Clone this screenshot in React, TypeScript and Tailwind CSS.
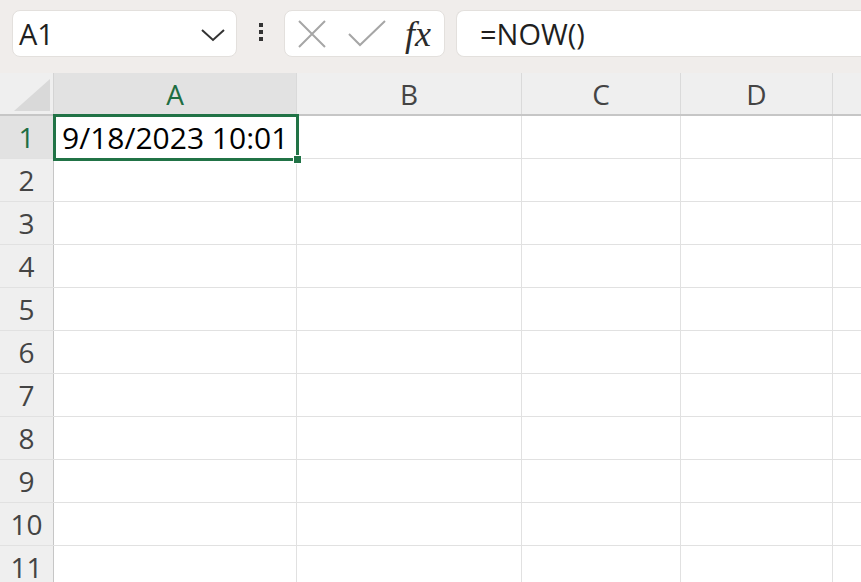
import React from "react";

const cols = [
  { name: "A", w: 243 },
  { name: "B", w: 225 },
  { name: "C", w: 159 },
  { name: "D", w: 152 },
  { name: "", w: 60 },
];
const rows = Array.from({ length: 11 }, (_, i) => i + 1);

function Toolbar() {
  return (
    <div className="flex h-[73px] shrink-0 items-start bg-[#f0edeb] pt-[10px]">
      <div className="ml-[12px] flex h-[47px] w-[225px] items-center justify-between rounded-lg border border-[#e3e0dd] bg-white pl-[6px] pr-[10px]">
        <span className="text-[29px] text-[#1f1f1f]">A1</span>
        <svg width="26" height="16" viewBox="0 0 26 16" className="mt-[2px]">
          <path d="M2 3 L13 13 L24 3" fill="none" stroke="#333" strokeWidth="2" />
        </svg>
      </div>
      <div className="flex w-[47px] flex-col items-center gap-[3px] pt-[13px]">
        <div className="h-[4px] w-[4px] bg-[#333]" />
        <div className="h-[4px] w-[4px] bg-[#333]" />
        <div className="h-[4px] w-[4px] bg-[#333]" />
      </div>
      <div className="flex h-[47px] w-[161px] items-center rounded-lg border border-[#e3e0dd] bg-white pl-[12px]">
        <svg width="30" height="30" viewBox="0 0 30 30">
          <path d="M2 2 L28 28 M28 2 L2 28" stroke="#a6a6a6" strokeWidth="2" fill="none" />
        </svg>
        <svg width="40" height="30" viewBox="0 0 40 30" className="ml-[20px]">
          <path d="M2 15 L13 26 L38 2" stroke="#a6a6a6" strokeWidth="2" fill="none" />
        </svg>
        <span className="ml-[18px] text-[36px] italic leading-none text-[#2b2b2b] [font-family:'Liberation_Serif',serif]">
          fx
        </span>
      </div>
      <div className="ml-[11px] flex h-[47px] flex-1 items-center rounded-l-lg border border-r-0 border-[#e3e0dd] bg-white pl-[23px]">
        <span className="text-[29px] text-[#1f1f1f]">=NOW()</span>
      </div>
    </div>
  );
}

function HeaderRow() {
  return (
    <div className="flex h-[43px] shrink-0 border-b-2 border-[#c6c6c6] bg-[#efefef]">
      <div className="relative w-[54px] shrink-0 border-r border-[#d4d4d4]">
        <svg width="36" height="32" viewBox="0 0 36 32" className="absolute bottom-[3px] right-[3px]">
          <path d="M36 0 L36 32 L0 32 Z" fill="#d9d9d9" />
        </svg>
      </div>
      {cols.map((c) => (
        <div
          key={c.name + c.w}
          style={{ width: c.w }}
          className={`flex shrink-0 items-center justify-center border-r border-[#dadada] text-[28px] ${
            c.name === "A" ? "bg-[#e2e2e2] text-[#1e6e42]" : "text-[#444]"
          }`}
        >
          {c.name}
        </div>
      ))}
    </div>
  );
}

export default function App() {
  return (
    <div className="flex h-[582px] w-[861px] flex-col overflow-hidden bg-white [font-family:'Open_Sans','Noto_Sans',sans-serif]">
      <Toolbar />
      <HeaderRow />
      <div className="relative">
        {rows.map((r) => (
          <div key={r} className="flex h-[43px] border-b border-[#e1e1e1]">
            <div
              className={`flex w-[54px] shrink-0 items-center justify-center border-r border-[#c6c6c6] text-[28px] ${
                r === 1 ? "bg-[#e2e2e2] text-[#1e6e42]" : "bg-[#efefef] text-[#444]"
              }`}
            >
              {r}
            </div>
            {cols.map((c, i) => (
              <div
                key={i}
                style={{ width: c.w }}
                className="flex shrink-0 items-center border-r border-[#e1e1e1] pl-[8px] text-[30px] text-black"
              >
                {r === 1 && i === 0 ? "9/18/2023 10:01" : ""}
              </div>
            ))}
          </div>
        ))}
        <div className="absolute left-[53px] top-[-2px] h-[47px] w-[246px] border-[3px] border-[#217346]">
          <div className="absolute bottom-[-6px] right-[-6px] h-[9px] w-[9px] border border-white bg-[#217346]" />
        </div>
      </div>
    </div>
  );
}
